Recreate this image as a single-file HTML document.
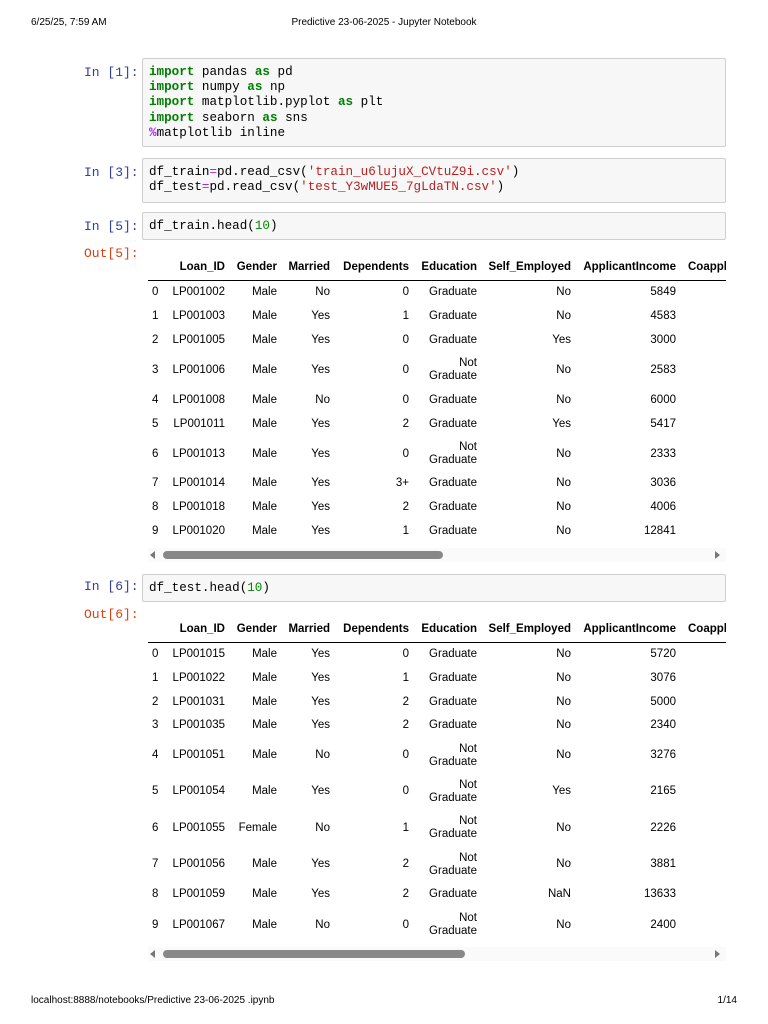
<!DOCTYPE html>
<html><head><meta charset="utf-8"><style>
body{margin:0;width:768px;height:1024px;background:#fff;position:relative;overflow:hidden;font-family:"Liberation Sans",Arial,sans-serif;color:#000}
.a{position:absolute}
.hdr{font-size:10px;top:17px}
.p{position:absolute;font-family:"Liberation Mono",monospace;font-size:13px;color:#303f9f;left:84px;line-height:15px}
.o{color:#d84315}
.c{position:absolute;left:142px;width:584px;background:#f7f7f7;border:1px solid #cfcfcf;border-radius:2px;font-family:"Liberation Mono",monospace;font-size:12.6px;line-height:15.2px;padding:6px 6px;box-sizing:border-box;white-space:pre}
.k{color:#008000;font-weight:bold}.s{color:#ba2121}.n{color:#080}.m{color:#aa22ff;font-weight:bold}.eq{color:#aa22ff}
.tw{position:absolute;left:148px;width:578px;overflow:hidden}
table{border-collapse:collapse;table-layout:fixed;font-size:11.5px;width:592px}
td,th{text-align:right;padding:0 4px;white-space:nowrap;overflow:hidden;vertical-align:middle;line-height:13px}
th{font-weight:bold;height:26px;border-bottom:1px solid #000;vertical-align:middle}
.sb{position:absolute;left:148px;width:578px;height:14px;background:#fafafa}
.th{position:absolute;top:3px;height:8px;border-radius:4px;background:#888}
.la{position:absolute;left:2px;top:3px;width:0;height:0;border-top:4px solid transparent;border-bottom:4px solid transparent;border-right:5px solid #777}
.ra{position:absolute;right:6px;top:3px;width:0;height:0;border-top:4px solid transparent;border-bottom:4px solid transparent;border-left:5px solid #777}
</style></head><body>
<div class="a hdr" style="left:31px">6/25/25, 7:59 AM</div>
<div class="a hdr" style="left:0;width:768px;text-align:center">Predictive 23-06-2025 - Jupyter Notebook</div>

<div class="p" style="top:65px">In [1]:</div>
<div class="c" style="top:58px;height:89px"><span class="k">import</span> pandas <span class="k">as</span> pd
<span class="k">import</span> numpy <span class="k">as</span> np
<span class="k">import</span> matplotlib.pyplot <span class="k">as</span> plt
<span class="k">import</span> seaborn <span class="k">as</span> sns
<span class="m">%</span>matplotlib inline</div>

<div class="p" style="top:165px">In [3]:</div>
<div class="c" style="top:158px;height:45px">df_train<span class="eq">=</span>pd.read_csv(<span class="s">'train_u6lujuX_CVtuZ9i.csv'</span>)
df_test<span class="eq">=</span>pd.read_csv(<span class="s">'test_Y3wMUE5_7gLdaTN.csv'</span>)</div>

<div class="p" style="top:219px">In [5]:</div>
<div class="c" style="top:212px;height:28px">df_train.head(<span class="n">10</span>)</div>
<div class="p o" style="top:246px">Out[5]:</div>

<div class="tw" style="top:254px">
<table>
<colgroup><col style="width:14px"><col style="width:67px"><col style="width:52px"><col style="width:53px"><col style="width:79px"><col style="width:68px"><col style="width:94px"><col style="width:105px"><col style="width:60px"></colgroup>
<tr><th></th><th>Loan_ID</th><th>Gender</th><th>Married</th><th>Dependents</th><th>Education</th><th>Self_Employed</th><th>ApplicantIncome</th><th style="text-align:left;padding-left:8px">Coapplicant</th></tr>
<tr style="height:24px"><td>0</td><td>LP001002</td><td>Male</td><td>No</td><td>0</td><td>Graduate</td><td>No</td><td>5849</td><td></td></tr>
<tr style="height:24px"><td>1</td><td>LP001003</td><td>Male</td><td>Yes</td><td>1</td><td>Graduate</td><td>No</td><td>4583</td><td></td></tr>
<tr style="height:24px"><td>2</td><td>LP001005</td><td>Male</td><td>Yes</td><td>0</td><td>Graduate</td><td>Yes</td><td>3000</td><td></td></tr>
<tr style="height:35px"><td>3</td><td>LP001006</td><td>Male</td><td>Yes</td><td>0</td><td>Not<br>Graduate</td><td>No</td><td>2583</td><td></td></tr>
<tr style="height:25px"><td>4</td><td>LP001008</td><td>Male</td><td>No</td><td>0</td><td>Graduate</td><td>No</td><td>6000</td><td></td></tr>
<tr style="height:24px"><td>5</td><td>LP001011</td><td>Male</td><td>Yes</td><td>2</td><td>Graduate</td><td>Yes</td><td>5417</td><td></td></tr>
<tr style="height:35px"><td>6</td><td>LP001013</td><td>Male</td><td>Yes</td><td>0</td><td>Not<br>Graduate</td><td>No</td><td>2333</td><td></td></tr>
<tr style="height:24px"><td>7</td><td>LP001014</td><td>Male</td><td>Yes</td><td>3+</td><td>Graduate</td><td>No</td><td>3036</td><td></td></tr>
<tr style="height:24px"><td>8</td><td>LP001018</td><td>Male</td><td>Yes</td><td>2</td><td>Graduate</td><td>No</td><td>4006</td><td></td></tr>
<tr style="height:24px"><td>9</td><td>LP001020</td><td>Male</td><td>Yes</td><td>1</td><td>Graduate</td><td>No</td><td>12841</td><td></td></tr>
</table></div>
<div class="sb" style="top:548px"><div class="la"></div><div class="th" style="left:15px;width:280px"></div><div class="ra"></div></div>

<div class="p" style="top:579px">In [6]:</div>
<div class="c" style="top:574px;height:28px">df_test.head(<span class="n">10</span>)</div>
<div class="p o" style="top:607px">Out[6]:</div>

<div class="tw" style="top:616px">
<table>
<colgroup><col style="width:14px"><col style="width:67px"><col style="width:52px"><col style="width:53px"><col style="width:79px"><col style="width:68px"><col style="width:94px"><col style="width:105px"><col style="width:60px"></colgroup>
<tr><th></th><th>Loan_ID</th><th>Gender</th><th>Married</th><th>Dependents</th><th>Education</th><th>Self_Employed</th><th>ApplicantIncome</th><th style="text-align:left;padding-left:8px">Coapplicant</th></tr>
<tr style="height:24px"><td>0</td><td>LP001015</td><td>Male</td><td>Yes</td><td>0</td><td>Graduate</td><td>No</td><td>5720</td><td></td></tr>
<tr style="height:24px"><td>1</td><td>LP001022</td><td>Male</td><td>Yes</td><td>1</td><td>Graduate</td><td>No</td><td>3076</td><td></td></tr>
<tr style="height:23px"><td>2</td><td>LP001031</td><td>Male</td><td>Yes</td><td>2</td><td>Graduate</td><td>No</td><td>5000</td><td></td></tr>
<tr style="height:24px"><td>3</td><td>LP001035</td><td>Male</td><td>Yes</td><td>2</td><td>Graduate</td><td>No</td><td>2340</td><td></td></tr>
<tr style="height:36px"><td>4</td><td>LP001051</td><td>Male</td><td>No</td><td>0</td><td>Not<br>Graduate</td><td>No</td><td>3276</td><td></td></tr>
<tr style="height:36px"><td>5</td><td>LP001054</td><td>Male</td><td>Yes</td><td>0</td><td>Not<br>Graduate</td><td>Yes</td><td>2165</td><td></td></tr>
<tr style="height:37px"><td>6</td><td>LP001055</td><td>Female</td><td>No</td><td>1</td><td>Not<br>Graduate</td><td>No</td><td>2226</td><td></td></tr>
<tr style="height:36px"><td>7</td><td>LP001056</td><td>Male</td><td>Yes</td><td>2</td><td>Not<br>Graduate</td><td>No</td><td>3881</td><td></td></tr>
<tr style="height:24px"><td>8</td><td>LP001059</td><td>Male</td><td>Yes</td><td>2</td><td>Graduate</td><td>NaN</td><td>13633</td><td></td></tr>
<tr style="height:37px"><td>9</td><td>LP001067</td><td>Male</td><td>No</td><td>0</td><td>Not<br>Graduate</td><td>No</td><td>2400</td><td></td></tr>
</table></div>
<div class="sb" style="top:947px"><div class="la"></div><div class="th" style="left:15px;width:302px"></div><div class="ra"></div></div>

<div class="a hdr" style="left:31px;top:995px">localhost:8888/notebooks/Predictive 23-06-2025 .ipynb</div>
<div class="a hdr" style="right:31px;top:995px">1/14</div>
</body></html>
